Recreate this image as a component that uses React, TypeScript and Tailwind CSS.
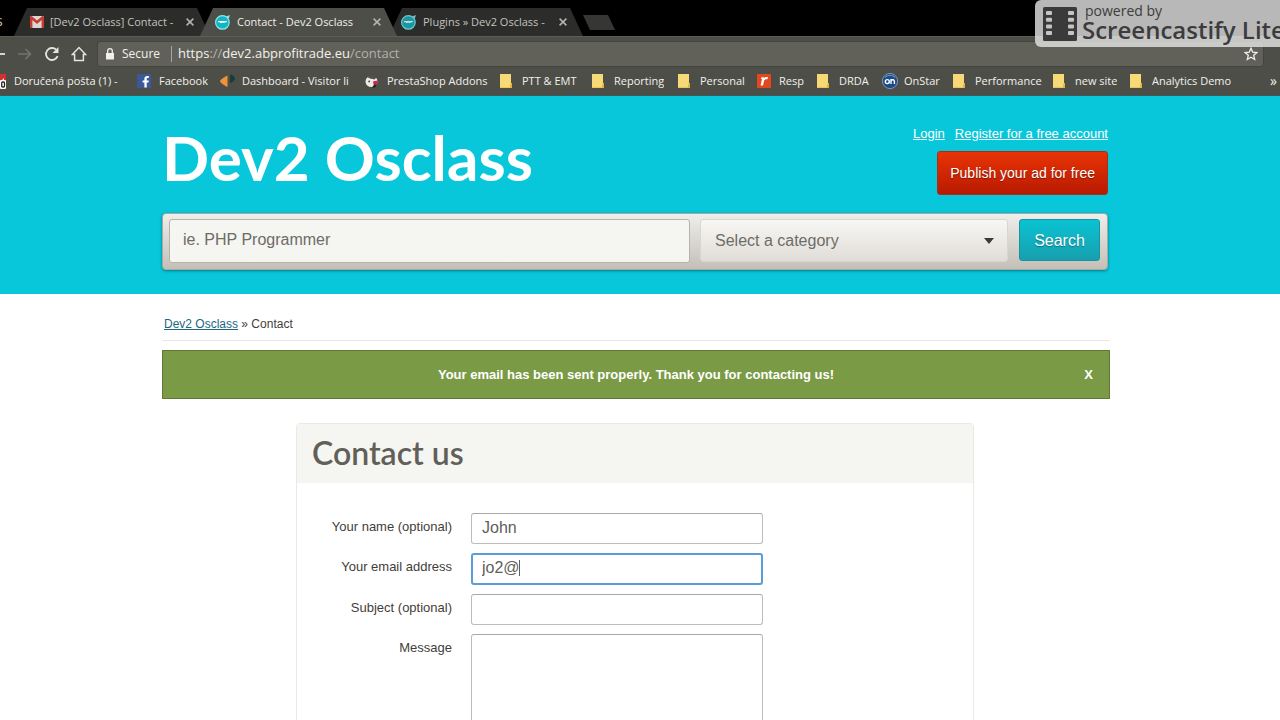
import { useState } from "react";
import type { ReactNode } from "react";

function GmailIcon() {
  return (
    <svg viewBox="0 0 14 12" className="h-3 w-3.5 shrink-0">
      <rect width="14" height="12" rx="1" fill="#dcd8d4" />
      <path d="M0 1a1 1 0 0 1 1-1h.6L7 4.6 12.4 0h.6a1 1 0 0 1 1 1v11h-2.4V4L7 8 2.4 4v8H0z" fill="#c73c33" />
    </svg>
  );
}

function OsclassIcon({ dim = false }: { dim?: boolean }) {
  return (
    <svg viewBox="0 0 16 16" className={dim ? "h-4 w-4 shrink-0 opacity-80" : "h-4 w-4 shrink-0"}>
      <path d="M11 2.500L14.800 1 13.800 5z" fill="#8be6ec" />
      <circle cx="7.4" cy="8.4" r="6.8" fill="#12b5c4" stroke="#8be6ec" strokeWidth="1.200" />
      <path d="M3 7h8.800v1.200H10l-.8.900H8.200l-.8-.7-.8.700H5.400l-.8-.9H3z" fill="#fff" />
    </svg>
  );
}

function CloseIcon() {
  return (
    <svg viewBox="0 0 8 8" className="h-2 w-2">
      <path d="M.6.6l6.8 6.8M7.4.6L.6 7.4" stroke="#b4b4b0" strokeWidth="1.5" />
    </svg>
  );
}

type TabProps = { icon: ReactNode; title: string; active?: boolean; className: string };

function Tab({ icon, title, active, className }: TabProps) {
  return (
    <div
      className={`flex h-7 items-center pr-4 [clip-path:polygon(13px_0,calc(100%-13px)_0,100%_100%,0_100%)] ${
        active ? "bg-[#4e4e49] text-[#eeeeea]" : "bg-[#2c2d2b] text-[#c2c2be]"
      } ${className}`}
    >
      {icon}
      <span className="ml-1.5 flex-1 overflow-hidden whitespace-nowrap">{title}</span>
      <button type="button" aria-label="Close tab" className="ml-2">
        <CloseIcon />
      </button>
    </div>
  );
}

function Folder() {
  return (
    <svg viewBox="0 0 12 14" className="h-3.5 w-3">
      <path d="M0 0h11v9h1v5H0z" fill="#f7d978" />
      <path d="M11 9h1v5h-2v-3z" fill="#e0b63f" />
      <path d="M0 13h10v1H0z" fill="#e9c65c" />
    </svg>
  );
}

function MailBadge() {
  return (
    <svg viewBox="0 0 16 16" className="h-4 w-4">
      <path d="M1 1h13v12H1z" fill="#e8e4e0" />
      <path d="M1 1h13v7h-2V5L8 9 4 5v8H1z" fill="#d32f2f" />
      <rect x="8" y="7" width="6" height="9" rx="1" fill="#fff" />
      <rect x="9.700" y="9" width="2.800" height="5" rx="1" fill="none" stroke="#222" strokeWidth="1.3" />
    </svg>
  );
}

function FacebookIcon() {
  return (
    <svg viewBox="0 0 14 14" className="h-3.5 w-3.5">
      <rect width="14" height="14" rx="1" fill="#3b5998" />
      <path d="M7.4 13.6V8.6H5.6V6.5h1.8V4.9c0-1.8 1.1-2.8 2.8-2.8h1.6v2h-1c-.9 0-1.1.4-1.1 1v1.4h2.1l-.3 2.1H9.7v5z" fill="#fff" />
    </svg>
  );
}

function DashboardIcon() {
  return (
    <svg viewBox="0 0 16 14" className="h-3.5 w-4">
      <path d="M7.500 1.500v11.500C5 12 0 8.500 0 7.200S5 2.500 7.500 1.500z" fill="#f0923b" />
      <path d="M10 .5v8.500c2.500-1 5-3 5-4.600S12.500 1 10 .5z" fill="#173d38" />
    </svg>
  );
}

function PrestaIcon() {
  return (
    <svg viewBox="0 0 14 14" className="h-3.5 w-3.5">
      <ellipse cx="6.500" cy="7.500" rx="6" ry="5.500" fill="#eeeae6" />
      <path d="M2.500 3.200C5 1 9 1 11.500 3.500L9.500 5.500 5 4.600z" fill="#55504e" />
      <circle cx="4.200" cy="7.400" r=".9" fill="#3a3a3a" />
      <path d="M8 7.500l4.500-1v3L8.800 11.500z" fill="#d01a55" />
      <path d="M9 11l3-1-2 3.500H7z" fill="#1f1f1f" />
    </svg>
  );
}

function RespIcon() {
  return (
    <svg viewBox="0 0 14 14" className="h-3.5 w-3.5">
      <rect width="14" height="14" fill="#e2481f" />
      <path d="M4.500 3.200h2.400l-.1.800c.9-.9 2.300-1.200 4.200-1l-.6 2.300c-2-.2-3 .2-3.400 1.600L6 11.400H3.600L5 5H4z" fill="#fff" />
    </svg>
  );
}

function OnStarIcon() {
  return (
    <svg viewBox="0 0 16 16" className="h-4 w-4">
      <circle cx="8" cy="8" r="7.600" fill="#1d4b86" stroke="#86a9cf" strokeWidth=".8" />
      <path d="M3 4.500C5 1.500 11 1.500 13 4.500" stroke="#6f9bcb" strokeWidth="1.200" fill="none" />
      <circle cx="5.300" cy="8.600" r="2" fill="none" stroke="#fff" strokeWidth="1.400" />
      <path d="M9 11V7.600c1-1.400 3.400-1.200 3.400.8V11M9 6v5" stroke="#fff" strokeWidth="1.400" fill="none" />
    </svg>
  );
}

const bookmarks: { label: string; icon: ReactNode; width: string }[] = [
  { label: "Doručená pošta (1) -", icon: <MailBadge />, width: "w-[145px]" },
  { label: "Facebook", icon: <FacebookIcon />, width: "w-[83px]" },
  { label: "Dashboard - Visitor li", icon: <DashboardIcon />, width: "w-[145px]" },
  { label: "PrestaShop Addons", icon: <PrestaIcon />, width: "w-[135px]" },
  { label: "PTT & EMT", icon: <Folder />, width: "w-[92px]" },
  { label: "Reporting", icon: <Folder />, width: "w-[86px]" },
  { label: "Personal", icon: <Folder />, width: "w-[79px]" },
  { label: "Resp", icon: <RespIcon />, width: "w-[60px]" },
  { label: "DRDA", icon: <Folder />, width: "w-[65px]" },
  { label: "OnStar", icon: <OnStarIcon />, width: "w-[71px]" },
  { label: "Performance", icon: <Folder />, width: "w-[100px]" },
  { label: "new site", icon: <Folder />, width: "w-[77px]" },
  { label: "Analytics Demo", icon: <Folder />, width: "w-[112px]" },
];

function BrowserChrome() {
  return (
    <div className="shrink-0 bg-black font-['Open_Sans','Noto_Sans',sans-serif] text-[11px]">
      <div className="flex h-9 items-end overflow-hidden">
        <span className="flex w-3.5 self-center pt-1.5 text-sm text-[#c2c2be]">
          <span className="-ml-1">s</span>
        </span>
        <Tab icon={<GmailIcon />} title="[Dev2 Osclass] Contact -" className="w-[196px] pl-4" />
        <Tab
          icon={<OsclassIcon />}
          title="Contact - Dev2 Osclass"
          active
          className="z-10 -ml-2.5 w-[197px] pl-[15px]"
        />
        <Tab icon={<OsclassIcon dim />} title="Plugins » Dev2 Osclass -" className="-ml-2 w-[194px] pl-3" />
        <button
          type="button"
          aria-label="New tab"
          className="mb-1.5 h-[15px] w-8 bg-[#363735] [clip-path:polygon(0_0,25px_0,100%_100%,7px_100%)]"
        />
      </div>
      <div className="flex h-[31px] items-center border-t border-[#5c5c57] bg-[#4e4e49] pt-[3px] pr-4">
        <div className="flex w-[97px] shrink-0 items-center">
          <svg viewBox="0 0 6 12" className="h-3 w-1.5">
            <path d="M0 6h5" stroke="#e4e4e0" strokeWidth="1.800" />
          </svg>
          <svg viewBox="0 0 14 12" className="ml-3 h-3 w-3.5">
            <path d="M0 6h12.500M7.500 1l5 5-5 5" stroke="#74746f" strokeWidth="1.600" fill="none" />
          </svg>
          <svg viewBox="0 0 16 16" className="ml-3 h-4 w-4">
            <path d="M13.600 10.200A6 6 0 1 1 12.200 3.700" stroke="#e4e4e0" strokeWidth="1.800" fill="none" />
            <path d="M14.500 1v6H8.500z" fill="#e4e4e0" />
          </svg>
          <svg viewBox="0 0 16 16" className="ml-[11px] h-4 w-4">
            <path d="M1.400 8.600L8 1.600l6.600 7H12.400v6H3.600v-6z" stroke="#e4e4e0" strokeWidth="1.500" fill="none" />
          </svg>
        </div>
        <div className="flex h-[26px] flex-1 items-center rounded-sm border border-[#454540] bg-[#61615a] px-2 text-[13px] text-[#f1f1ec]">
          <svg viewBox="0 0 8 12" className="h-3 w-2">
            <path d="M0 5h8v6.500H0z" fill="#f1f1ec" />
            <path d="M1.700 5.500V3a2.300 2.300 0 0 1 4.600 0v2.500" stroke="#f1f1ec" strokeWidth="1.300" fill="none" />
          </svg>
          <span className="ml-2 flex w-[50px] border-r border-[#a5a59f] text-xs">Secure</span>
          <span className="ml-1.5 flex-1 whitespace-nowrap">
            https<span className="text-[#b2b2ab]">://</span>dev2.abprofitrade.eu
            <span className="text-[#b2b2ab]">/contact</span>
          </span>
          <svg viewBox="0 0 14 14" className="-mr-[3px] h-3.5 w-3.5">
            <path
              d="M7 1.200l1.700 3.900 4.200.4-3.200 2.800 1 4.200L7 10.300l-3.700 2.200 1-4.200L1.100 5.500l4.200-.4z"
              stroke="#eeeeea"
              strokeWidth="1.300"
              fill="none"
            />
          </svg>
        </div>
      </div>
      <nav className="flex h-[29px] items-center overflow-hidden border-b border-[#3c5c5c] bg-[#4e4e49] text-[#f1f1ec]">
        <div className="-ml-2 flex flex-1">
          {bookmarks.map((b) => (
            <a key={b.label} href="#" className={`flex shrink-0 items-center ${b.width}`}>
              <span className="flex w-[22px] shrink-0">{b.icon}</span>
              <span className="overflow-hidden whitespace-nowrap">{b.label}</span>
            </a>
          ))}
        </div>
        <button type="button" aria-label="More bookmarks" className="mr-[3px] text-sm leading-none">
          »
        </button>
      </nav>
    </div>
  );
}

function RecorderBadge() {
  return (
    <div className="absolute top-0 left-[1035px] z-20 flex h-[47px] w-[260px] items-center rounded-md bg-[#e6e6e6]/80 pl-2 font-['Open_Sans','Noto_Sans',sans-serif] text-[#3c3c3c]">
      <svg viewBox="0 0 34 34" className="h-[34px] w-[34px] shrink-0">
        <rect width="34" height="34" rx="1.500" fill="#3a3a3a" />
        <g fill="#c4c4c4">
          {[4, 10.700, 17.400, 24.100].map((y) => (
            <g key={y}>
              <rect x="3" y={y} width="6" height="4" rx="1" />
              <rect x="25" y={y} width="6" height="4" rx="1" />
            </g>
          ))}
        </g>
      </svg>
      <div className="ml-[5px] pb-1 whitespace-nowrap">
        <div className="pl-[3px] text-sm leading-4">powered by</div>
        <div className="text-[24px] leading-[22px] font-semibold">Screencastify Lite</div>
      </div>
    </div>
  );
}

function SiteHeader() {
  return (
    <header className="bg-[#08c7da] pr-2 pb-6">
      <div className="mx-auto flex w-full max-w-[948px] flex-col pt-7 pr-0.5">
        <div className="flex items-start justify-between">
          <h1 className="pt-[3px] font-['Lato',sans-serif] text-[62px] leading-[60px] font-bold text-white">
            Dev2 Osclass
          </h1>
          <div className="flex flex-col items-end">
            <div className="flex h-[27px] items-start gap-2.5 text-[13px] leading-5 text-white">
              <a href="#" className="underline">Login</a>
              <a href="#" className="underline">Register for a free account</a>
            </div>
            <button
              type="button"
              className="h-11 rounded-[3px] border border-[#a3301c] bg-linear-to-b from-[#e93305] to-[#b81a02] px-3 text-sm text-white [text-shadow:0_1px_1px_rgba(0,0,0,0.4)]"
            >
              Publish your ad for free
            </button>
          </div>
        </div>
        <form
          onSubmit={(e) => e.preventDefault()}
          className="mt-[18px] flex h-[57px] items-start rounded-[4px] border border-[#a5aaa4] bg-linear-to-b from-[#efeeeb] to-[#c4c0b8] p-1.5 pt-[5px] pr-[7px] text-base shadow-[0_1px_3px_rgba(0,0,0,0.4)]"
        >
          <input
            type="text"
            aria-label="Search"
            placeholder="ie. PHP Programmer"
            className="h-11 min-w-0 flex-1 rounded-[3px] border border-[#b5b3ad] bg-[#f5f5f2] px-[13px] pb-0.5 text-[#616058] outline-none placeholder:text-[#6d6c66]"
          />
          <div className="relative ml-2.5 w-[308px]">
            <select
              aria-label="Category"
              className="h-[43px] w-full appearance-none rounded-[3px] border border-[#d8d6d1] bg-linear-to-b from-[#f7f7f4] to-[#e1dcd8] px-3.5 text-[#6d6c66] outline-none"
            >
              <option>Select a category</option>
            </select>
            <svg viewBox="0 0 10 6" className="pointer-events-none absolute top-[19px] right-3.5 h-1.5 w-2.5">
              <path d="M0 0h10L5 6z" fill="#3c3b38" />
            </svg>
          </div>
          <button
            type="submit"
            className="ml-[11px] h-[42px] w-[81px] rounded-[3px] border border-[#1a93a1] bg-linear-to-b from-[#08c3d3] to-[#169fae] pt-0.5 text-white [text-shadow:0_1px_1px_rgba(0,0,0,0.35)]"
          >
            Search
          </button>
        </form>
      </div>
    </header>
  );
}

const labelClass = "w-[140px] pt-[5px] text-right text-[13px] leading-[18px] text-[#3f3e3b]";
const fieldClass =
  "w-[292px] rounded-[3px] border border-[#bdbcb8] border-t-[#a9a8a4] bg-white px-2.5 pb-0.5 text-base text-[#616058] outline-none";

function ContactForm() {
  const [name, setName] = useState("John");
  const [email, setEmail] = useState("jo2@");

  return (
    <section className="mx-auto w-full max-w-[678px] rounded-[4px] border border-[#e9e9e6] bg-white">
      <h2 className="h-[59px] bg-[#f5f5f1] px-[15px] font-['Lato',sans-serif] text-[32px] leading-[58px] font-semibold text-[#616058]">
        Contact us
      </h2>
      <form onSubmit={(e) => e.preventDefault()} className="flex flex-col gap-[9px] pt-[30px] pb-10 pl-[15px]">
        <div className="flex items-start gap-[19px]">
          <label htmlFor="name" className={labelClass}>Your name (optional)</label>
          <input id="name" type="text" value={name} onChange={(e) => setName(e.target.value)} className={`${fieldClass} h-[31px]`} />
        </div>
        <div className="flex items-start gap-[19px]">
          <label htmlFor="email" className={labelClass}>Your email address</label>
          <div className="relative flex">
            <input
              id="email"
              type="text"
              value={email}
              onChange={(e) => setEmail(e.target.value)}
              className="h-8 w-[292px] rounded-[3px] border-2 border-[#5b9dd9] bg-white px-[9px] pb-0.5 text-base text-[#616058] outline-none"
            />
            <span className="absolute top-[7px] left-12 h-4 w-px bg-[#616058]" />
          </div>
        </div>
        <div className="flex items-start gap-[19px]">
          <label htmlFor="subject" className={labelClass}>Subject (optional)</label>
          <input id="subject" type="text" className={`${fieldClass} h-[31px]`} />
        </div>
        <div className="flex items-start gap-[19px]">
          <label htmlFor="message" className={labelClass}>Message</label>
          <textarea id="message" className={`${fieldClass} h-[150px] resize-none pt-2`} />
        </div>
      </form>
    </section>
  );
}

export default function App() {
  const [notice, setNotice] = useState(true);

  return (
    <div className="relative flex h-screen flex-col overflow-hidden bg-white font-['Liberation_Sans',Arial,sans-serif]">
      <BrowserChrome />
      <RecorderBadge />
      <div className="min-h-0 flex-1 overflow-hidden">
        <SiteHeader />
        <main className="pr-2">
          <div className="mx-auto w-full max-w-[948px]">
            <div className="mb-[9px] border-b border-[#e6e6e3] pt-[22px] pb-2 pl-0.5 text-xs leading-4 text-[#3f3e3b]">
              <a href="#" className="text-[#1c6880] underline">Dev2 Osclass</a> » Contact
            </div>
            {notice && (
              <div className="relative flex h-[49px] items-center justify-center border border-[#5f7838] bg-[#7a9a46] text-[13px] font-bold text-white">
                Your email has been sent properly. Thank you for contacting us!
                <button type="button" onClick={() => setNotice(false)} className="absolute right-4">
                  X
                </button>
              </div>
            )}
            <div className="pt-6 pr-0.5">
              <ContactForm />
            </div>
          </div>
        </main>
      </div>
    </div>
  );
}
